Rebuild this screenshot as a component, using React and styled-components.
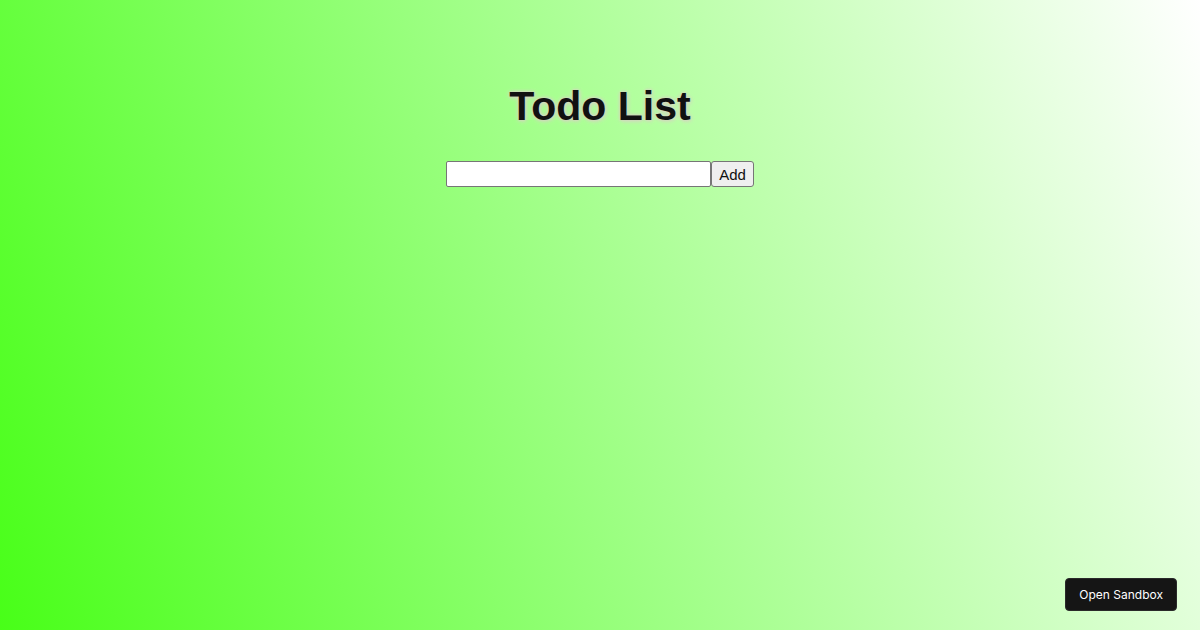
import React, { useState } from "react";
import styled, { createGlobalStyle } from "styled-components";

const Global = createGlobalStyle`
  html, body { margin: 0; padding: 0; height: 100%; }
  body { font-family: "Liberation Sans", Arial, sans-serif; }
  #root { min-height: 100vh; }
`;

const Page = styled.div`
  min-height: 100vh;
  box-sizing: border-box;
  background: linear-gradient(70deg, #48ff18 0%, #ffffff 100%);
  display: flex;
  flex-direction: column;
  align-items: center;
  padding-top: 83px;
`;

const Title = styled.h1`
  margin: 0 0 32px;
  font-family: "Liberation Sans", Arial, sans-serif;
  font-size: 41px;
  line-height: 46px;
  font-weight: 700;
  color: #111;
  text-shadow: 0 0 2px #d6d6c2, 0 0 4px #d6d6c2, 1px 1px 5px #d6d6c2;
`;

const Form = styled.form`
  display: flex;
  align-items: stretch;
`;

const Input = styled.input`
  box-sizing: border-box;
  width: 265px;
  height: 26px;
  border: 1px solid #767676;
  border-radius: 2px;
  background: #fff;
  padding: 1px 4px;
  font-family: "Liberation Sans", Arial, sans-serif;
  font-size: 16px;
  outline: none;
`;

const AddButton = styled.button`
  box-sizing: border-box;
  height: 26px;
  padding: 1px 6px;
  border: 1px solid #767676;
  border-radius: 3px;
  background: #efefef;
  color: #111;
  font-family: "Liberation Sans", Arial, sans-serif;
  font-size: 15px;
  min-width: 43px;
  cursor: pointer;
`;

const SandboxButton = styled.a`
  position: fixed;
  right: 23px;
  bottom: 19px;
  box-sizing: border-box;
  height: 33px;
  padding: 0 13px;
  display: flex;
  align-items: center;
  background: #151515;
  color: #fff;
  border: 1px solid #2a2a2a;
  border-radius: 4px;
  font-family: Inter, "Liberation Sans", sans-serif;
  font-size: 12px;
  text-decoration: none;
`;

export default function App() {
  const [value, setValue] = useState("");
  return (
    <>
      <Global />
      <Page>
        <Title>Todo List</Title>
        <Form onSubmit={(e) => e.preventDefault()}>
          <Input value={value} onChange={(e) => setValue(e.target.value)} />
          <AddButton type="submit">Add</AddButton>
        </Form>
      </Page>
      <SandboxButton href="#">Open Sandbox</SandboxButton>
    </>
  );
}
